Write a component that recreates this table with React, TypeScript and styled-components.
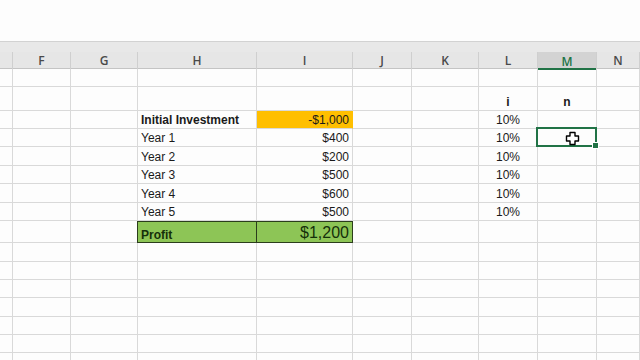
import React from 'react'
import styled, { createGlobalStyle, css } from 'styled-components'

const GlobalStyle = createGlobalStyle`
  html, body {
    margin: 0;
    padding: 0;
    background: #fdfdfd;
  }
  body {
    font-family: 'Liberation Sans', Arial, sans-serif;
  }
`

const COLUMNS = ['E', 'F', 'G', 'H', 'I', 'J', 'K', 'L', 'M', 'N']
const WIDTHS = '13px 58px 67px 119px 96px 59px 67px 59px 59px 1fr'
const ROW_HEIGHTS = [18, 24, 18, 18, 19, 18, 19, 18, 22, 19, 18, 18, 19, 18, 18, 18]

type CellData = { text?: string; align?: 'left' | 'right' | 'center'; bold?: boolean; fill?: 'orange' | 'green'; big?: boolean }

const DATA: Record<string, CellData> = {
  'L1': { text: 'i', align: 'center', bold: true },
  'M1': { text: 'n', align: 'center', bold: true },
  'H2': { text: 'Initial Investment', bold: true },
  'I2': { text: '-$1,000', align: 'right', fill: 'orange' },
  'H3': { text: 'Year 1' },
  'I3': { text: '$400', align: 'right' },
  'H4': { text: 'Year 2' },
  'I4': { text: '$200', align: 'right' },
  'H5': { text: 'Year 3' },
  'I5': { text: '$500', align: 'right' },
  'H6': { text: 'Year 4' },
  'I6': { text: '$600', align: 'right' },
  'H7': { text: 'Year 5' },
  'I7': { text: '$500', align: 'right' },
  'H8': { text: 'Profit', bold: true, fill: 'green' },
  'I8': { text: '$1,200', align: 'right', fill: 'green', big: true },
}
;[2, 3, 4, 5, 6, 7].forEach((r) => {
  DATA['L' + r] = { text: '10%', align: 'center' }
})

const Page = styled.div`
  width: 640px;
  height: 360px;
  overflow: hidden;
  display: flex;
  flex-direction: column;
  background: #fdfdfd;
`

const TopBlank = styled.div`
  height: 41px;
  flex: none;
`

const Band = styled.div`
  height: 11px;
  flex: none;
  background: #e8e8e8;
  border-top: 1px solid #d2d2d2;
  box-sizing: border-box;
`

const HeaderRow = styled.div`
  display: grid;
  grid-template-columns: ${WIDTHS};
  height: 17px;
  flex: none;
  background: #e6e6e6;
  border-bottom: 1px solid #c4c4c4;
  box-sizing: border-box;
`

const HeaderCell = styled.div<{ selected?: boolean }>`
  display: flex;
  align-items: center;
  justify-content: center;
  font-family: 'Open Sans', 'Liberation Sans', sans-serif;
  font-size: 12px;
  font-weight: 600;
  color: #4a4a4a;
  border-right: 1px solid #cfcfcf;
  ${({ selected }) =>
    selected &&
    css`
      background: #d3d3d3;
      color: #217346;
      box-shadow: inset 0 -2px 0 #217346;
      margin-bottom: -1px;
    `}
`

const Row = styled.div<{ h: number }>`
  display: grid;
  grid-template-columns: ${WIDTHS};
  height: ${({ h }) => h}px;
  flex: none;
`

const Cell = styled.div<{ align?: string; bold?: boolean; fill?: string; big?: boolean }>`
  position: relative;
  display: flex;
  align-items: flex-end;
  justify-content: ${({ align }) =>
    align === 'right' ? 'flex-end' : align === 'center' ? 'center' : 'flex-start'};
  padding: 0 3px 2px 3px;
  box-sizing: border-box;
  border-right: 1px solid #d9d9d9;
  border-bottom: 1px solid #d9d9d9;
  font-size: ${({ big }) => (big ? 16 : 12)}px;
  font-weight: ${({ bold }) => (bold ? 700 : 400)};
  color: #1a1a1a;
  white-space: nowrap;
  line-height: 1;
  ${({ fill }) =>
    fill === 'orange' &&
    css`
      background: #ffbf00;
      border-right-color: #ffbf00;
    `}
  ${({ fill }) =>
    fill === 'green' &&
    css`
      background: #8dc556;
      color: #15300a;
      border: 1px solid #2b3d1c;
      border-left: none;
      padding-bottom: 1px;
    `}
`

const GreenStart = styled.div`
  position: absolute;
  left: -1px;
  top: -1px;
  bottom: -1px;
  width: 1px;
  background: #2b3d1c;
`

const SelectBox = styled.div`
  position: absolute;
  top: -2px;
  left: -2px;
  right: -1px;
  bottom: -1px;
  border: 2px solid #217346;
  pointer-events: none;
  z-index: 2;
`

const FillHandle = styled.div`
  position: absolute;
  right: -4px;
  bottom: -4px;
  width: 5px;
  height: 5px;
  background: #217346;
  border: 1px solid #fff;
`

const Cursor = styled.svg`
  position: absolute;
  left: 27px;
  top: 2px;
  z-index: 3;
`

const PlusCursor = () => (
  <Cursor width="15" height="15" viewBox="0 0 15 15">
    <path
      d="M5 1.5h5v3.5h3.5v5H10v3.5H5V10H1.5V5H5z"
      fill="#fff"
      stroke="#000"
      strokeWidth="1.4"
      strokeLinejoin="round"
    />
  </Cursor>
)

export default function App() {
  return (
    <>
      <GlobalStyle />
      <Page>
        <TopBlank />
        <Band />
        <HeaderRow>
          {COLUMNS.map((c) => (
            <HeaderCell key={c} selected={c === 'M'}>
              {c === 'E' ? '' : c}
            </HeaderCell>
          ))}
        </HeaderRow>
        {ROW_HEIGHTS.map((h, r) => (
          <Row key={r} h={h}>
            {COLUMNS.map((c) => {
              const d = DATA[c + r]
              return (
                <Cell key={c} align={d?.align} bold={d?.bold} fill={d?.fill} big={d?.big}>
                  {d?.fill === 'green' && c === 'H' && <GreenStart />}
                  {d?.text}
                  {c === 'M' && r === 3 && (
                    <SelectBox>
                      <FillHandle />
                    </SelectBox>
                  )}
                  {c === 'M' && r === 3 && <PlusCursor />}
                </Cell>
              )
            })}
          </Row>
        ))}
      </Page>
    </>
  )
}
